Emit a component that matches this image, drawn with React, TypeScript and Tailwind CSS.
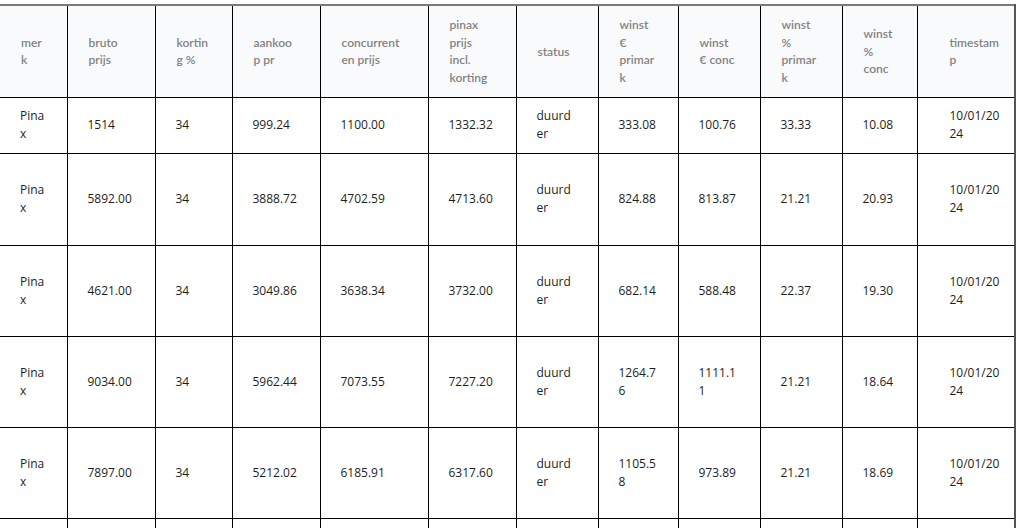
import React from "react";

const widths = [67, 88, 77, 88, 108, 88, 82, 80, 82, 82, 75, 98];

const headers: string[][] = [
  ["mer", "k"],
  ["bruto", "prijs"],
  ["kortin", "g %"],
  ["aankoo", "p pr"],
  ["concurrent", "en prijs"],
  ["pinax", "prijs", "incl.", "korting"],
  ["status"],
  ["winst", "€", "primar", "k"],
  ["winst", "€ conc"],
  ["winst", "%", "primar", "k"],
  ["winst", "%", "conc"],
  ["timestam", "p"],
];

const rows: string[][][] = [
  [["Pina", "x"], ["1514"], ["34"], ["999.24"], ["1100.00"], ["1332.32"], ["duurd", "er"], ["333.08"], ["100.76"], ["33.33"], ["10.08"], ["10/01/20", "24"]],
  [["Pina", "x"], ["5892.00"], ["34"], ["3888.72"], ["4702.59"], ["4713.60"], ["duurd", "er"], ["824.88"], ["813.87"], ["21.21"], ["20.93"], ["10/01/20", "24"]],
  [["Pina", "x"], ["4621.00"], ["34"], ["3049.86"], ["3638.34"], ["3732.00"], ["duurd", "er"], ["682.14"], ["588.48"], ["22.37"], ["19.30"], ["10/01/20", "24"]],
  [["Pina", "x"], ["9034.00"], ["34"], ["5962.44"], ["7073.55"], ["7227.20"], ["duurd", "er"], ["1264.7", "6"], ["1111.1", "1"], ["21.21"], ["18.64"], ["10/01/20", "24"]],
  [["Pina", "x"], ["7897.00"], ["34"], ["5212.02"], ["6185.91"], ["6317.60"], ["duurd", "er"], ["1105.5", "8"], ["973.89"], ["21.21"], ["18.69"], ["10/01/20", "24"]],
];

const rowHeights = ["h-[56px]", "h-[92px]", "h-[91px]", "h-[91px]", "h-[91px]"];

function Lines({ lines }: { lines: string[] }) {
  return (
    <>
      {lines.map((l, i) => (
        <div key={i} className="whitespace-nowrap">
          {l}
        </div>
      ))}
    </>
  );
}

export default function App() {
  return (
    <div className="w-[1024px] h-[528px] overflow-hidden bg-white pt-[4px]">
      <table className="table-fixed border-collapse w-[1016px]">
        <colgroup>
          {widths.map((w, i) => (
            <col key={i} style={{ width: w }} />
          ))}
        </colgroup>
        <thead>
          <tr className="h-[92px] bg-[#f9fafc] border-t-2 border-t-[#7b7b7b]">
            {headers.map((h, i) => (
              <th
                key={i}
                className={`align-middle text-left font-semibold text-[12px] leading-[17.5px] text-[#838383] border-b border-black ${
                  i < 11 ? "border-r border-r-black" : "border-r-2 border-r-[#555]"
                } ${i === 11 ? "pl-[32px] pr-[8px]" : "pl-[21px] pr-[8px]"}`}
                style={{ fontFamily: "Lato, 'Open Sans', sans-serif" }}
              >
                <Lines lines={h} />
              </th>
            ))}
          </tr>
        </thead>
        <tbody>
          {rows.map((r, ri) => (
            <tr key={ri} className={rowHeights[ri]}>
              {r.map((c, ci) => (
                <td
                  key={ci}
                  className={`align-middle text-left text-[12px] leading-[18px] text-[#1e1e1e] border-b border-black ${
                    ci < 11 ? "border-r border-r-black" : "border-r-2 border-r-[#555]"
                  } ${ci === 11 ? "pl-[32px] pr-[8px]" : "pl-[20px] pr-[8px]"}`}
                  style={{ fontFamily: "'Open Sans', 'Noto Sans', sans-serif" }}
                >
                  <Lines lines={c} />
                </td>
              ))}
            </tr>
          ))}
          <tr className="h-[40px]">
            {widths.map((_, ci) => (
              <td
                key={ci}
                className={`${ci < 11 ? "border-r border-r-black" : "border-r-2 border-r-[#555]"}`}
              />
            ))}
          </tr>
        </tbody>
      </table>
    </div>
  );
}
